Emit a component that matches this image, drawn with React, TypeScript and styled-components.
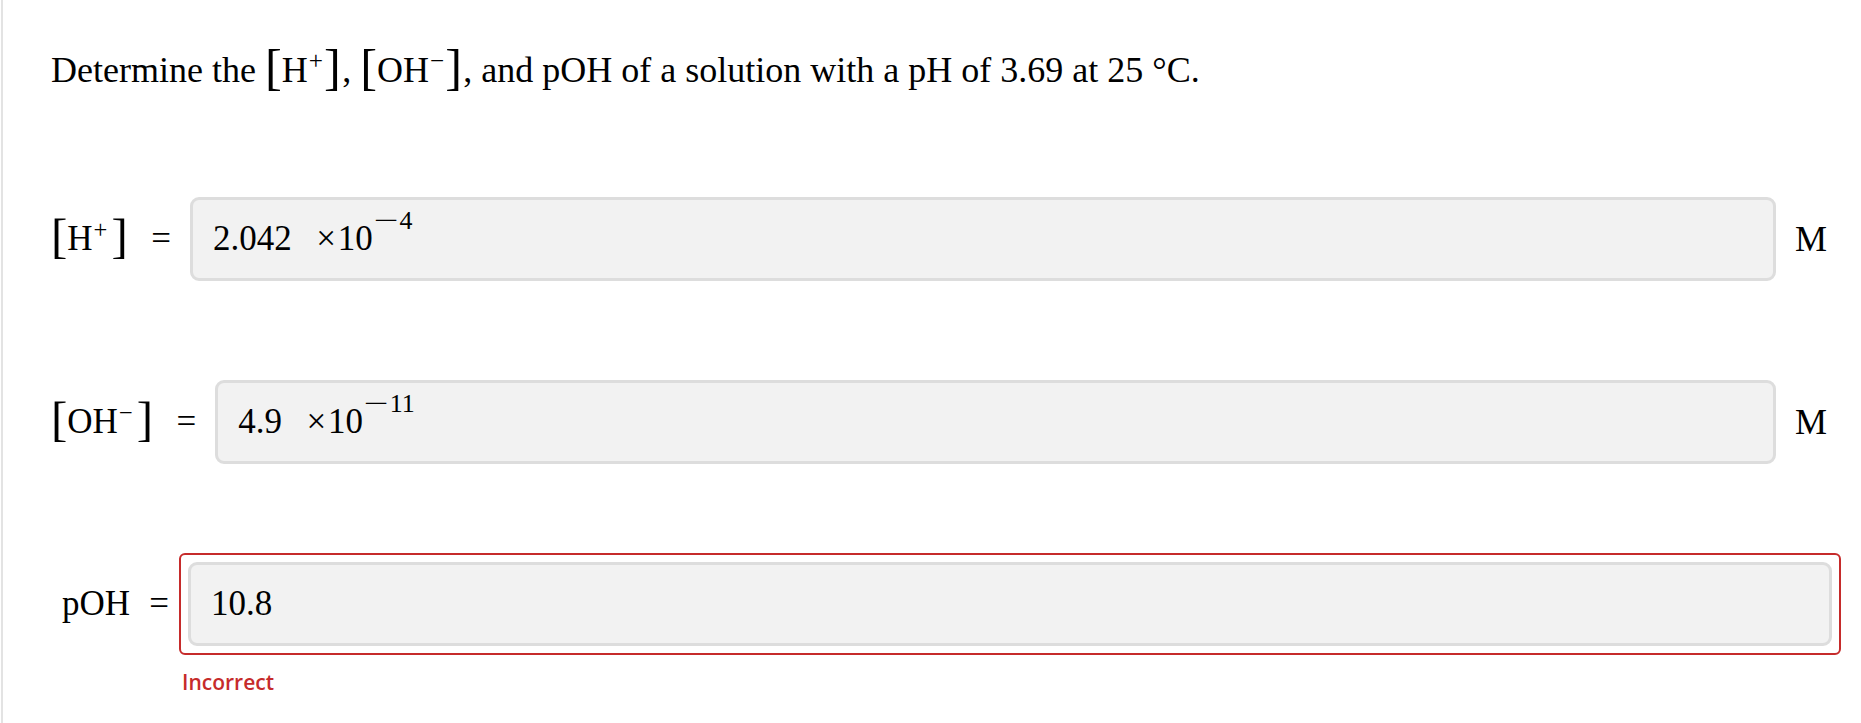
import React from "react";
import styled, { createGlobalStyle } from "styled-components";

const GlobalStyle = createGlobalStyle`
  html, body {
    margin: 0;
    padding: 0;
    background: #ffffff;
  }
  body {
    font-family: "Liberation Serif", "Times New Roman", serif;
    color: #000000;
  }
  * { box-sizing: border-box; }
`;

const Page = styled.main`
  margin-left: 1px;
  min-height: 100vh;
  border-left: 2px solid #e3e3e3;
  padding: 50px 20px 0 48px;
`;

const Title = styled.p`
  margin: 0;
  font-size: 36px;
  line-height: 40px;
  white-space: nowrap;
`;

const Ion = styled.span<{ $loose?: boolean }>`
  white-space: nowrap;
  padding-right: ${(p) => (p.$loose ? "0.12em" : "0.04em")};
`;

const Bracket = styled.span`
  font-size: 1.4em;
  line-height: 0;
  vertical-align: -0.04em;
`;

const Charge = styled.span<{ $loose?: boolean }>`
  font-size: 0.7em;
  line-height: 0;
  vertical-align: 0.5em;
  margin: 0 ${(p) => (p.$loose ? "4px" : "1px")} 0 1px;
`;

const Row = styled.div<{ $unit?: boolean; $gapTop: number }>`
  display: grid;
  grid-template-columns: ${(p) => (p.$unit ? "auto 1fr 46px" : "auto 1fr")};
  column-gap: 10px;
  align-items: center;
  margin-top: ${(p) => p.$gapTop}px;
`;

const Label = styled.div<{ $indent?: number }>`
  font-size: 35px;
  line-height: 40px;
  white-space: nowrap;
  padding-left: ${(p) => p.$indent ?? 0}px;
`;

const Equals = styled.span`
  margin-left: 0.55em;
`;

const FieldWrap = styled.div<{ $error?: boolean }>`
  border: 2px solid ${(p) => (p.$error ? "#c62b2b" : "transparent")};
  border-radius: 6px;
  padding: 7px;
`;

const Field = styled.div`
  height: 84px;
  display: flex;
  align-items: center;
  padding-left: 20px;
  background: #f2f2f2;
  border: 3px solid #dddddd;
  border-radius: 9px;
  font-size: 35px;
  line-height: 40px;
  white-space: nowrap;
`;

const Value = styled.span`
  white-space: nowrap;
`;

const Times = styled.span`
  margin-left: 0.7em;
  margin-right: 0.05em;
`;

const Exponent = styled.sup`
  font-size: 0.74em;
  line-height: 0;
  vertical-align: 0.8em;
`;

const LongMinus = styled.span`
  display: inline-block;
  transform: scaleX(1.7);
  transform-origin: left center;
  margin: 0 0.42em 0 0.05em;
`;

const Unit = styled.div`
  font-size: 36px;
  line-height: 40px;
`;

const Feedback = styled.div`
  grid-column: 2;
  margin: 13px 0 0 3px;
  font-family: "Open Sans", "Noto Sans", sans-serif;
  font-weight: 600;
  font-size: 21px;
  line-height: 28px;
  color: #c62b2b;
`;

const HIon = ({ loose }: { loose?: boolean }) => (
  <Ion $loose={loose}>
    <Bracket>[</Bracket>H<Charge $loose={loose}>+</Charge>
    <Bracket>]</Bracket>
  </Ion>
);

const OHIon = ({ loose }: { loose?: boolean }) => (
  <Ion $loose={loose}>
    <Bracket>[</Bracket>OH<Charge $loose={loose}>−</Charge>
    <Bracket>]</Bracket>
  </Ion>
);

const Scientific = ({ mantissa, power }: { mantissa: string; power: string }) => (
  <Value>
    {mantissa}
    <Times>×</Times>10
    <Exponent>
      <LongMinus>−</LongMinus>
      {power}
    </Exponent>
  </Value>
);

export default function App() {
  return (
    <>
      <GlobalStyle />
      <Page>
        <Title>
          Determine the <HIon />, <OHIon />, and pOH of a solution with a pH of 3.69 at 25 °C.
        </Title>

        <Row $unit $gapTop={98}>
          <Label>
            <HIon loose />
            <Equals>=</Equals>
          </Label>
          <FieldWrap>
            <Field>
              <Scientific mantissa="2.042" power="4" />
            </Field>
          </FieldWrap>
          <Unit>M</Unit>
        </Row>

        <Row $unit $gapTop={81}>
          <Label>
            <OHIon loose />
            <Equals>=</Equals>
          </Label>
          <FieldWrap>
            <Field>
              <Scientific mantissa="4.9" power="11" />
            </Field>
          </FieldWrap>
          <Unit>M</Unit>
        </Row>

        <Row $gapTop={80}>
          <Label $indent={11}>
            pOH<Equals>=</Equals>
          </Label>
          <FieldWrap $error>
            <Field>
              <Value>10.8</Value>
            </Field>
          </FieldWrap>
          <Feedback>Incorrect</Feedback>
        </Row>
      </Page>
    </>
  );
}
